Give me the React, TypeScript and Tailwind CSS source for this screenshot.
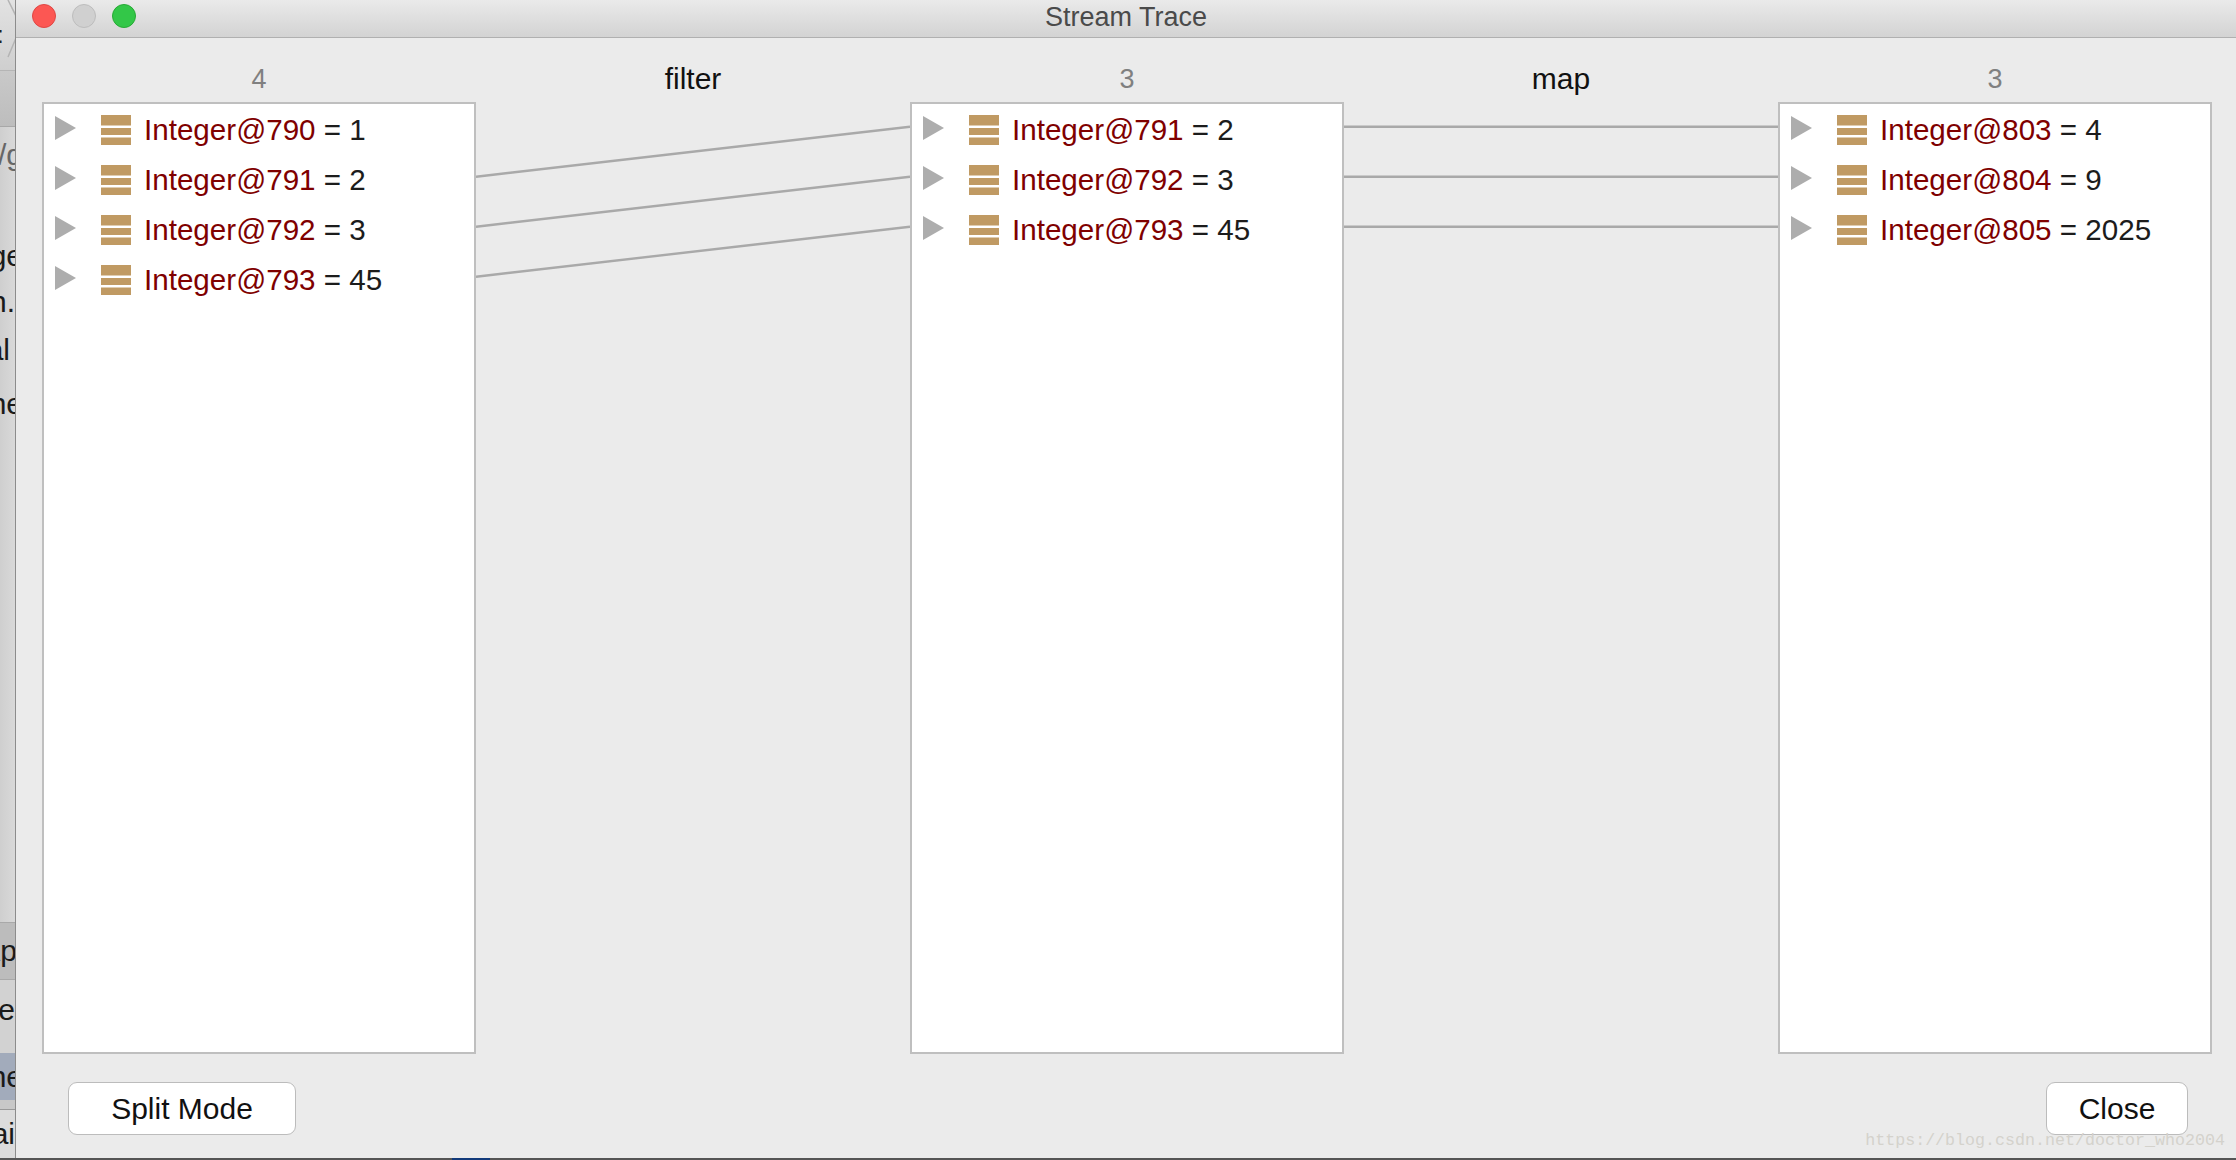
const font = { fontFamily: '"Liberation Sans", Arial, sans-serif' };

type Row = { name: string; value: string };

const columns: { count: string; rows: Row[] }[] = [
  {
    count: "4",
    rows: [
      { name: "Integer@790", value: "1" },
      { name: "Integer@791", value: "2" },
      { name: "Integer@792", value: "3" },
      { name: "Integer@793", value: "45" },
    ],
  },
  {
    count: "3",
    rows: [
      { name: "Integer@791", value: "2" },
      { name: "Integer@792", value: "3" },
      { name: "Integer@793", value: "45" },
    ],
  },
  {
    count: "3",
    rows: [
      { name: "Integer@803", value: "4" },
      { name: "Integer@804", value: "9" },
      { name: "Integer@805", value: "2025" },
    ],
  },
];

function Arrow() {
  return (
    <svg width="21" height="24" viewBox="0 0 21 24" className="shrink-0 -mt-1">
      <polygon points="0,0 21,12 0,24" fill="#adadad" />
    </svg>
  );
}

function FieldIcon() {
  return (
    <svg width="30" height="30" viewBox="0 0 30 30" className="shrink-0">
      <rect x="0" y="0" width="30" height="10.5" fill="#c09a63" />
      <rect x="0" y="13" width="30" height="7" fill="#c09a63" />
      <rect x="0" y="22.5" width="30" height="7.5" fill="#c09a63" />
    </svg>
  );
}

function Panel({ rows }: { rows: Row[] }) {
  return (
    <div className="flex-1 bg-white border-2 border-[#bfbfbf] pt-px">
      {rows.map((r) => (
        <div key={r.name} className="h-[50px] flex items-center pl-[11px]">
          <Arrow />
          <div className="ml-[25px]">
            <FieldIcon />
          </div>
          <span className="ml-[13px] text-[29.6px] leading-none whitespace-pre text-[#1c1c1c]">
            <span className="text-[#7f0000]">{r.name}</span>
            {" = "}
            {r.value}
          </span>
        </div>
      ))}
    </div>
  );
}

function Header({ children, dark }: { children: string; dark?: boolean }) {
  return (
    <div
      className={`h-[64px] pt-[18px] flex items-center justify-center leading-none ${
        dark ? "text-[30px] text-[#111111]" : "text-[27px] text-[#808080]"
      }`}
    >
      {children}
    </div>
  );
}

function Connector({ label, lines }: { label: string; lines: [number, number][] }) {
  return (
    <div className="w-[434px] flex flex-col">
      <Header dark>{label}</Header>
      <svg viewBox="0 0 434 952" className="flex-1 w-full h-[952px]">
        {lines.map(([a, b], i) => (
          <line key={i} x1="0" y1={a} x2="434" y2={b} stroke="#a9a9a9" strokeWidth="2.4" />
        ))}
      </svg>
    </div>
  );
}

function Column({ count, rows }: { count: string; rows: Row[] }) {
  return (
    <div className="w-[434px] flex flex-col">
      <Header>{count}</Header>
      <Panel rows={rows} />
    </div>
  );
}

function StripRow({
  text,
  className,
  textClass = "",
  color = "text-[#1a1a1a]",
}: {
  text?: string;
  className: string;
  textClass?: string;
  color?: string;
}) {
  return (
    <div className={`flex items-center justify-end overflow-hidden text-[30px] leading-none whitespace-pre ${color} ${className}`}>
      <span className={`shrink-0 ${textClass}`}>{text}</span>
    </div>
  );
}

function Button({ label, className }: { label: string; className: string }) {
  return (
    <button className={`h-[53px] bg-white border border-[#bcbcbc] rounded-[9px] text-[30px] leading-none text-[#111111] ${className}`}>
      {label}
    </button>
  );
}

export default function App() {
  return (
    <div className="w-[2236px] h-[1160px] flex flex-col overflow-hidden bg-[#555555]" style={font}>
      <div className="h-[1158px] flex">
        {/* window behind */}
        <div className="w-[16px] shrink-0 flex flex-col border-r border-[#8c8c8c] bg-gradient-to-r from-[#cfcfcf] to-[#d9d9d9]">
          <div className="relative h-[71px] flex items-center overflow-hidden bg-gradient-to-b from-[#e2e2e2] to-[#cfcfcf] border-b border-[#b5b5b5]">
            <span className="text-[24px] leading-none text-[#222222] -ml-[3px]">:</span>
            <svg width="16" height="60" viewBox="0 0 16 60" className="absolute left-0 top-0">
              <path d="M8 0 L16 16 M16 38 L8 57" stroke="#b4b4b4" strokeWidth="1.5" fill="none" />
            </svg>
          </div>
          <div className="h-[56px] bg-gradient-to-b from-[#c9c9c9] to-[#bdbdbd] border-b border-[#a8a8a8]" />
          <StripRow text="/g" className="h-[56px]" color="text-[#666666]" textClass="-mr-[8px]" />
          <div className="h-[50px]" />
          <StripRow text="ge" className="h-[45px]" textClass="-mr-[8px]" />
          <StripRow text="n." className="h-[47px]" />
          <StripRow text="al" className="h-[50px]" textClass="mr-[5px]" />
          <StripRow text="ne" className="h-[58px]" textClass="-mr-[8px]" />
          <div className="flex-1" />
          <StripRow text="Ap" className="h-[58px] bg-[#bcbcbc] border-y border-[#a9a9a9]" textClass="-mr-[2px]" />
          <StripRow text="e" className="h-[73px] bg-[#d2d2d2] pb-[14px]" />
          <StripRow text="ne" className="h-[47px] bg-[#a2abbb]" textClass="-mr-[8px]" />
          <div className="h-[10px] bg-[#c8c8c8] border-b border-[#999999]" />
          <StripRow text="ai" className="h-[48px] bg-[#dcdcdc]" />
        </div>

        {/* dialog */}
        <div className="relative flex-1 flex flex-col bg-[#ebebeb]">
          <div className="h-[38px] shrink-0 grid grid-cols-3 items-center border-b border-[#b0b0b0] bg-gradient-to-b from-[#eaeaea] to-[#d3d3d3]">
            <div className="flex gap-4 pl-4 -mt-[5px]">
              <div className="w-6 h-6 rounded-full bg-[#fc5753] border border-[#df4744]" />
              <div className="w-6 h-6 rounded-full bg-[#d0d0d0] border border-[#bdbdbd]" />
              <div className="w-6 h-6 rounded-full bg-[#33c748] border border-[#27aa35]" />
            </div>
            <div className="text-center text-[27px] leading-none text-[#4a4a4a] -mt-[3px]">Stream Trace</div>
          </div>

          <div className="flex pl-[26px]">
            <Column {...columns[0]} />
            <Connector label="filter" lines={[[74.7, 24.7], [124.7, 74.7], [174.7, 124.7]]} />
            <Column {...columns[1]} />
            <Connector label="map" lines={[[24.7, 24.7], [74.7, 74.7], [124.7, 124.7]]} />
            <Column {...columns[2]} />
          </div>

          <div className="flex-1 flex items-start justify-between pt-[28px] pl-[52px] pr-[48px]">
            <Button label="Split Mode" className="w-[228px]" />
            <Button label="Close" className="w-[142px]" />
          </div>

          <div
            className="absolute right-[11px] bottom-[8px] text-[16.67px] leading-none text-[#d4d2cc]"
            style={{ fontFamily: '"Liberation Mono", monospace' }}
          >
            https://blog.csdn.net/doctor_who2004
          </div>
        </div>
      </div>
      <div className="h-[2px] flex">
        <div className="ml-[452px] w-[38px] bg-[#123a7a]" />
      </div>
    </div>
  );
}
